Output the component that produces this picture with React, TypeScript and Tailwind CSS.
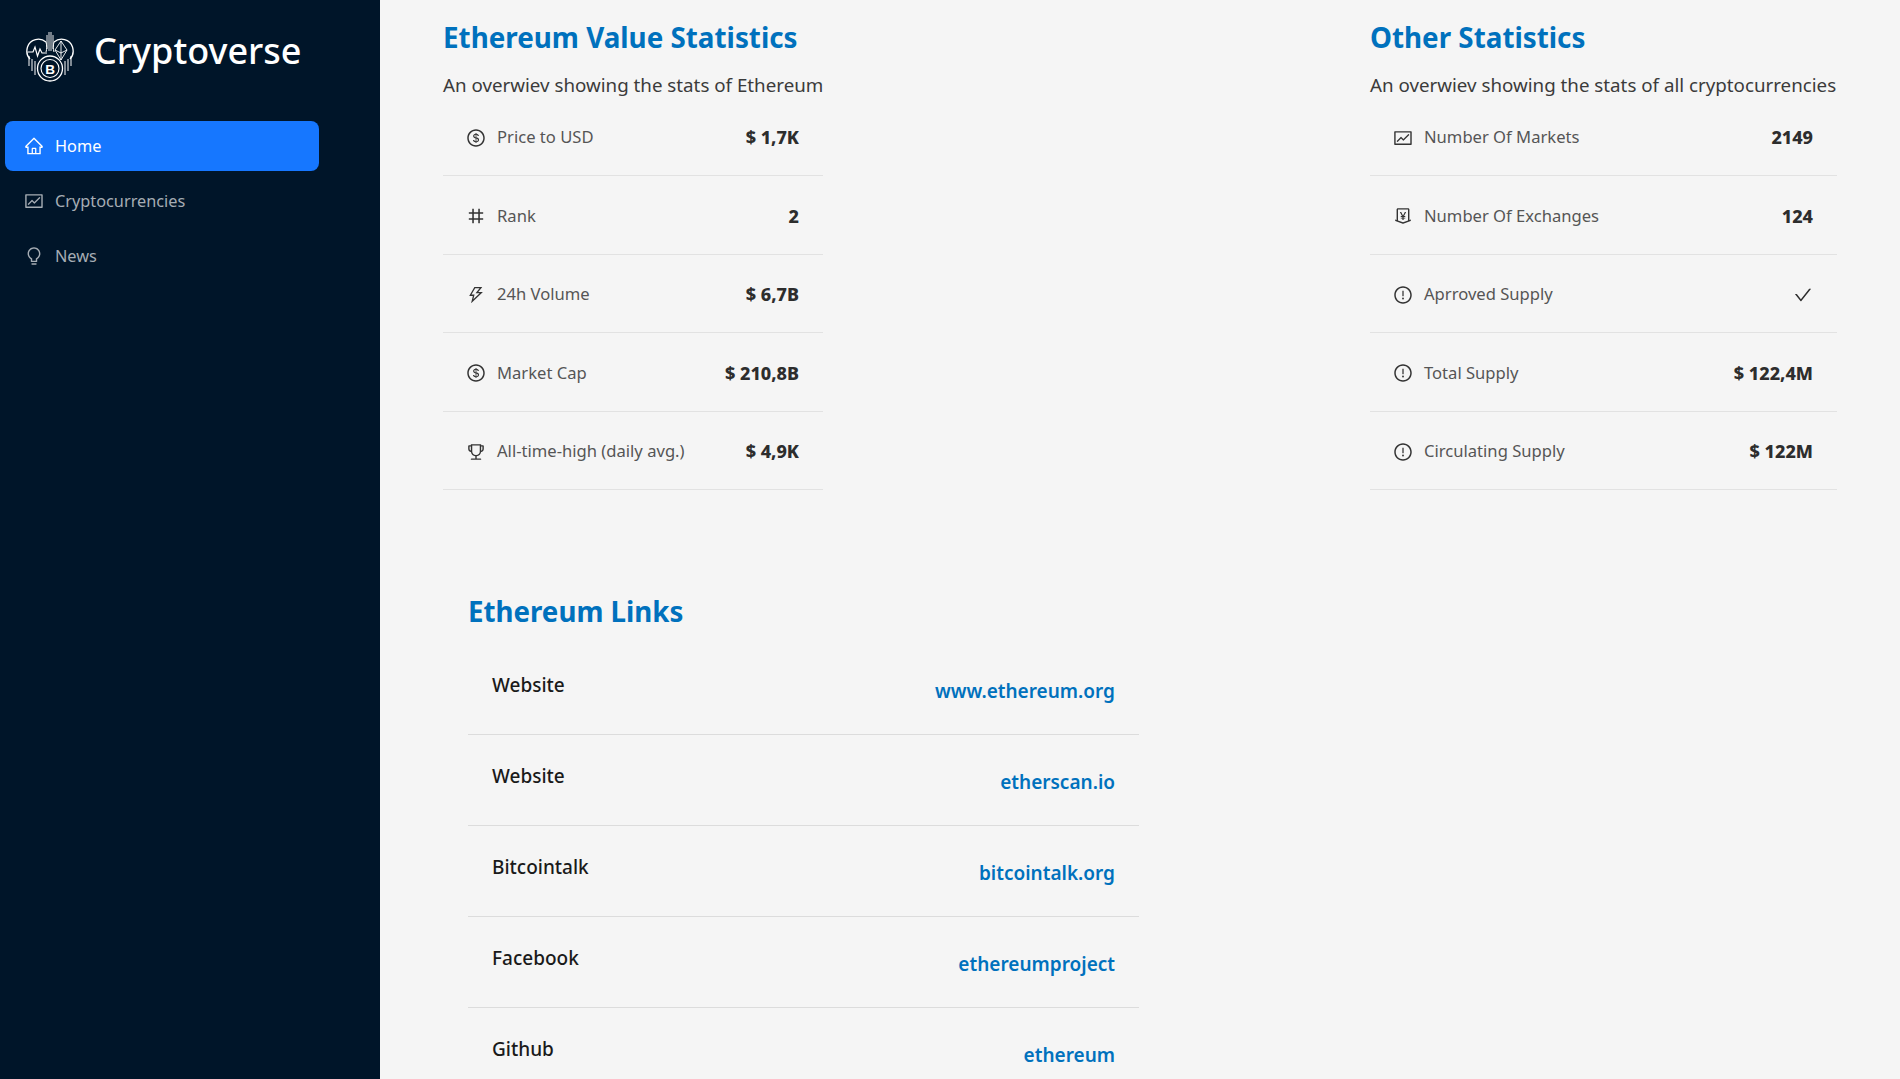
import type { ReactNode } from "react";
import {
  AiOutlineBulb,
  AiOutlineCheck,
  AiOutlineDollarCircle,
  AiOutlineExclamationCircle,
  AiOutlineFund,
  AiOutlineHome,
  AiOutlineMoneyCollect,
  AiOutlineNumber,
  AiOutlineThunderbolt,
  AiOutlineTrophy,
} from "react-icons/ai";

interface Stat {
  title: string;
  value: ReactNode;
  icon: ReactNode;
}

const valueStats: Stat[] = [
  { title: "Price to USD", value: "$ 1,7K", icon: <AiOutlineDollarCircle /> },
  { title: "Rank", value: "2", icon: <AiOutlineNumber /> },
  { title: "24h Volume", value: "$ 6,7B", icon: <AiOutlineThunderbolt /> },
  { title: "Market Cap", value: "$ 210,8B", icon: <AiOutlineDollarCircle /> },
  { title: "All-time-high (daily avg.)", value: "$ 4,9K", icon: <AiOutlineTrophy /> },
];

const otherStats: Stat[] = [
  { title: "Number Of Markets", value: "2149", icon: <AiOutlineFund /> },
  { title: "Number Of Exchanges", value: "124", icon: <AiOutlineMoneyCollect /> },
  { title: "Aprroved Supply", value: <AiOutlineCheck className="text-[20px]" />, icon: <AiOutlineExclamationCircle /> },
  { title: "Total Supply", value: "$ 122,4M", icon: <AiOutlineExclamationCircle /> },
  { title: "Circulating Supply", value: "$ 122M", icon: <AiOutlineExclamationCircle /> },
];

const links = [
  { type: "Website", name: "www.ethereum.org" },
  { type: "Website", name: "etherscan.io" },
  { type: "Bitcointalk", name: "bitcointalk.org" },
  { type: "Facebook", name: "ethereumproject" },
  { type: "Github", name: "ethereum" },
];

const Logo = () => (
  <svg viewBox="0 0 48 50" className="w-[48px] h-[50px] shrink-0" fill="none" stroke="#fff" strokeWidth="1.3">
    <path d="M20 10 C14 5 4 7 1.5 15 C0 20 1 24 4 27" />
    <path d="M28 10 C34 5 44 7 46.5 15 C48 20 47 24 44 27" />
    <path d="M20 10 C21 14 21 17 20 20 M28 10 C27 14 27 17 28 20" strokeWidth="1" />
    <path d="M1.5 20 H7 L9 15 L11.5 24 L14 17 L16 21 H21" strokeWidth="1.2" />
    <path d="M35 9 L41 18 L35 28 L29 18 Z M29 18 L35 21 L41 18 M35 9 V28" strokeWidth="0.9" />
    <path d="M21 3 V17 M23 0 V19 M25 0 V19 M27 3 V17" strokeWidth="0.9" />
    <path d="M3 24 V34 M6 27 V39 M9 29 V43 M45 24 V34 M42 27 V39 M39 29 V43" strokeWidth="1" />
    <circle cx="24" cy="36.5" r="12.5" strokeWidth="1.3" />
    <circle cx="24" cy="36.5" r="9" strokeWidth="1.1" />
    <text x="24" y="41.5" textAnchor="middle" fill="#fff" stroke="none" fontSize="13.5" fontWeight="700" fontFamily="'Liberation Sans', sans-serif">B</text>
  </svg>
);

const StatRow = ({ stat }: { stat: Stat }) => (
  <div className="flex items-center justify-between h-[78.5px] pl-[23px] pr-[24px] pt-[3px] border-b border-[#e2e2e2]">
    <div className="flex items-center gap-[11px] text-[16.6px] text-[#555]">
      <span className="text-[20px] text-[#333]">{stat.icon}</span>
      <span>{stat.title}</span>
    </div>
    <div className="text-[18px] font-extrabold text-[#2d2d2d]">{stat.value}</div>
  </div>
);

const StatColumn = ({ title, text, stats, width }: { title: string; text: string; stats: Stat[]; width: string }) => (
  <div className={width}>
    <h2 className="text-[27.8px] font-bold leading-[38px] text-[#0071bd] mt-[18px] whitespace-nowrap">{title}</h2>
    <p className="text-[18.75px] leading-[28px] text-[#3b3b3b] mt-[15px] whitespace-nowrap">{text}</p>
    <div className="-mt-[1.5px]">
      {stats.map((stat) => (
        <StatRow key={stat.title} stat={stat} />
      ))}
    </div>
  </div>
);

export default function App() {
  return (
    <div className="flex h-[1079px] overflow-hidden bg-[#f5f5f5] font-['Noto_Sans','Open_Sans',sans-serif]">
      <aside className="w-[380px] shrink-0 bg-[#001529]">
        <div className="flex items-center gap-[20px] pl-[26px] pt-[32px]">
          <Logo />
          <span className="text-[36px] leading-[40px] font-medium text-white -mt-[12px]">Cryptoverse</span>
        </div>
        <nav className="mt-[39px] text-[16.3px]">
          <div className="flex items-center gap-[11px] h-[50px] w-[314px] ml-[5px] pl-[19px] rounded-[8px] bg-[#1677ff] text-white">
            <AiOutlineHome className="text-[20px]" />
            <span>Home</span>
          </div>
          <div className="flex items-center gap-[11px] h-[50px] w-[314px] ml-[5px] pl-[19px] mt-[5px] text-[#a6adb4]">
            <AiOutlineFund className="text-[20px]" />
            <span>Cryptocurrencies</span>
          </div>
          <div className="flex items-center gap-[11px] h-[50px] w-[314px] ml-[5px] pl-[19px] mt-[5px] text-[#a6adb4]">
            <AiOutlineBulb className="text-[20px]" />
            <span>News</span>
          </div>
        </nav>
      </aside>
      <main className="flex-1 min-w-0">
        <div className="flex justify-between px-[63px]">
          <StatColumn
            title="Ethereum Value Statistics"
            text="An overwiev showing the stats of Ethereum"
            stats={valueStats}
            width="w-[380px]"
          />
          <StatColumn
            title="Other Statistics"
            text="An overwiev showing the stats of all cryptocurrencies"
            stats={otherStats}
            width="w-[467px]"
          />
        </div>
        <section className="w-[671px] ml-[88px] mt-[102px]">
          <h3 className="text-[27.7px] font-bold leading-[38px] text-[#0071bd]">Ethereum Links</h3>
          <div className="mt-[14px]">
            {links.map((link) => (
              <div
                key={link.name}
                className="flex justify-between h-[91px] px-[24px] pt-[27px] border-b border-[#dcdcdc] text-[19px]"
              >
                <span className="text-[#1a1a1a] font-medium leading-[28px]">{link.type}</span>
                <span className="text-[#0071bd] font-semibold leading-[28px] mt-[6px]">{link.name}</span>
              </div>
            ))}
          </div>
        </section>
      </main>
    </div>
  );
}
